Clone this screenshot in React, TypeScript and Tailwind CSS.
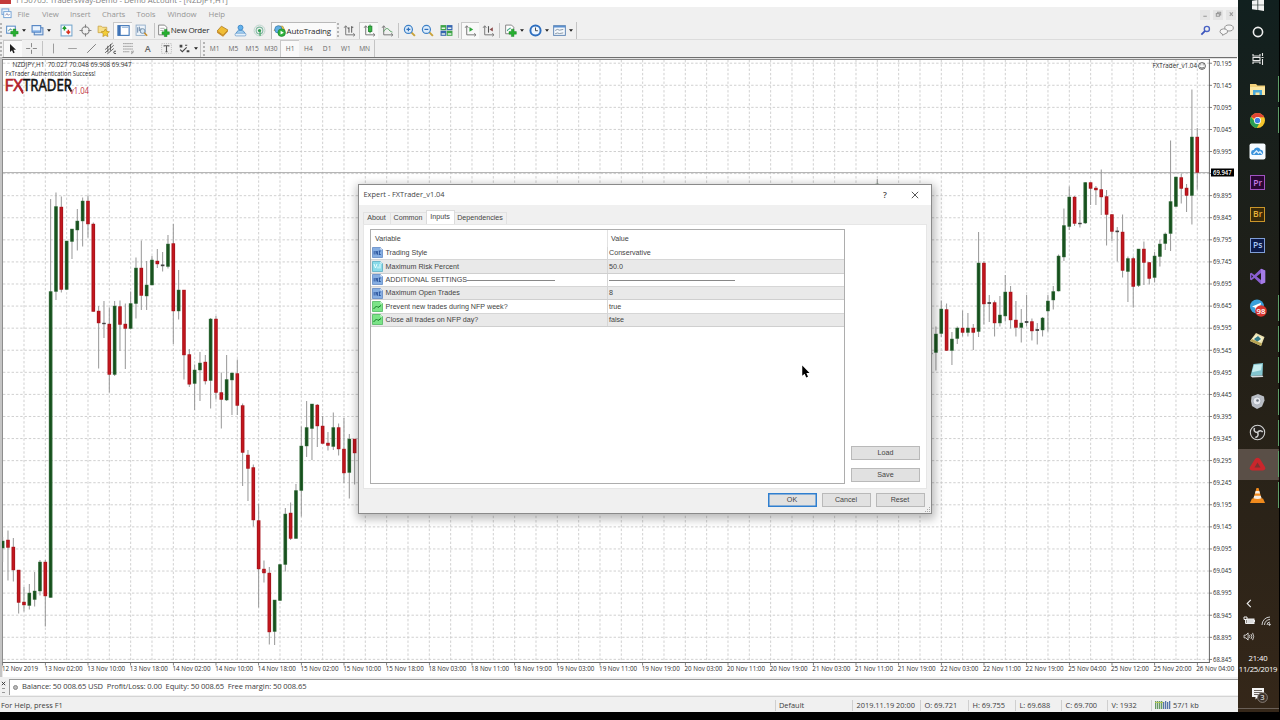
import type { ReactNode } from "react";

type Candle = [number, number, number, number, number, "g" | "r"];

// index, high, body top, body bottom, low, direction
const CANDLES: Candle[] = [
  [0, 537, 541, 548, 562, "g"], [1, 530.5, 540, 547.5, 580.5, "r"], [2, 538, 547, 570, 581.5, "r"],
  [3, 570, 570, 602.5, 613.5, "r"], [4, 587, 602, 605, 611.5, "r"], [5, 584, 593, 605.5, 609.5, "g"],
  [6, 572, 591, 599.5, 606.5, "g"], [7, 560, 562, 591, 595.5, "g"], [8, 560, 562, 596, 626.5, "r"],
  [9, 199, 291.5, 597.5, 597.5, "g"], [10, 192.5, 206.5, 291.5, 300, "g"], [11, 196.5, 207, 289.5, 292.5, "r"],
  [12, 241, 241, 289.5, 289.5, "g"], [13, 229, 229, 241.5, 259, "g"], [14, 209, 221, 230, 250.5, "g"],
  [15, 197.5, 201, 221, 246.5, "g"], [16, 195.5, 201, 224, 237.5, "r"], [17, 222.5, 224, 311.5, 311.5, "r"],
  [18, 306, 311, 323, 368.5, "r"], [19, 301, 323, 324, 338, "g"], [20, 307.5, 324, 374.5, 392.5, "r"],
  [21, 301, 306, 374.5, 376, "g"], [22, 300.5, 306.5, 324.5, 351, "r"], [23, 303.5, 324, 328.5, 369, "r"],
  [24, 291.5, 303.5, 328.5, 329.5, "g"], [25, 257.5, 268, 303.5, 318.5, "g"], [26, 240.5, 268, 295.5, 310, "r"],
  [27, 261, 285, 296, 310, "g"], [28, 256, 260, 285, 285, "g"], [29, 249, 261, 264, 268, "r"],
  [30, 252, 264.7, 266, 271.5, "r"], [31, 235, 244, 266.5, 268.5, "g"], [32, 224, 243.5, 311, 344, "r"],
  [33, 270, 290, 311, 319.5, "g"], [34, 290, 290, 355, 379.5, "r"], [35, 349, 354.5, 384.3, 387, "r"],
  [36, 364.5, 370, 383.5, 410, "g"], [37, 352, 363, 370, 401, "g"], [38, 355, 362, 381, 384.5, "r"],
  [39, 318, 319, 380.5, 408.5, "g"], [40, 316, 319, 392.5, 399.5, "r"], [41, 372.5, 392.5, 399.5, 428.5, "r"],
  [42, 355, 379.5, 400, 401, "g"], [43, 373, 373, 380, 415, "g"], [44, 359.5, 373.5, 405.5, 415, "r"],
  [45, 403.5, 405.5, 452.5, 486, "r"], [46, 450, 455, 468.5, 501, "r"], [47, 464.5, 467.5, 520, 526.5, "r"],
  [48, 504, 520.5, 569, 607.5, "r"], [49, 560.5, 569, 573, 582.5, "r"], [50, 567, 573, 632, 644.5, "r"],
  [51, 600, 600, 631.5, 645, "g"], [52, 564, 564.5, 600.5, 601, "g"], [53, 508, 514, 564.5, 571.5, "g"],
  [54, 502.5, 513, 538.5, 540, "r"], [55, 484, 490.5, 538.5, 538.5, "g"], [56, 426.5, 446, 490.5, 516.5, "g"],
  [57, 401, 427.5, 446, 457, "g"], [58, 404, 404, 428.5, 460, "g"], [59, 404, 405, 426, 447, "r"],
  [60, 416, 426, 443.5, 443.5, "r"], [61, 432, 443, 445.5, 450.5, "r"], [62, 412.5, 427.5, 446.5, 450, "g"],
  [63, 423.5, 427.5, 449, 455.5, "r"], [64, 418, 449, 473, 483, "r"], [65, 434, 439, 472.5, 498.5, "g"],
  [66, 439, 439, 453, 484.5, "r"], [164, 179, 184, 190, 195, "g"], [174, 353, 353, 354, 354, "r"],
  [175, 326.5, 334, 352.5, 370.5, "g"], [176, 300.5, 309, 333.5, 337, "g"], [177, 303.5, 309.5, 350.5, 351, "r"],
  [178, 332, 339, 350.5, 365, "g"], [179, 326.5, 328, 338.5, 344, "g"], [180, 310.5, 328, 332.5, 336.5, "r"],
  [181, 313, 328, 332.5, 336.5, "g"], [182, 324, 328, 332.5, 350, "r"], [183, 232, 263, 331.5, 337, "g"],
  [184, 261, 263, 304, 324.5, "r"], [185, 295, 302.3, 303.7, 322, "g"], [186, 300.5, 302.5, 323, 336.5, "r"],
  [187, 296, 315, 323, 326.5, "g"], [188, 275, 292, 316, 321.5, "g"], [189, 286, 292, 320, 328.5, "r"],
  [190, 301, 320, 327.5, 336.5, "r"], [191, 309, 323, 327.5, 342.5, "g"], [192, 295, 321.3, 322.7, 326.5, "g"],
  [193, 318.5, 321.5, 331, 340.5, "r"], [194, 323, 329.3, 330.7, 344.5, "g"], [195, 317, 318, 330, 336.5, "g"],
  [196, 295, 301, 311, 331.5, "g"], [197, 286, 291.5, 300, 309.5, "g"], [198, 254.5, 256, 291, 291.5, "g"],
  [199, 208.5, 225.5, 257, 261, "g"], [200, 186.5, 197, 226.5, 230, "g"], [201, 196, 197, 223.5, 226, "r"],
  [202, 210, 223, 224, 227.5, "g"], [203, 182, 182.5, 223, 224, "g"], [204, 182.5, 182.5, 188.5, 205, "r"],
  [205, 186, 188, 190, 205, "r"], [206, 169.5, 189.5, 197, 215, "r"], [207, 190, 196.5, 214.5, 245.5, "r"],
  [208, 214, 214.5, 231.5, 241, "r"], [209, 227, 230.8, 232, 261.5, "g"], [210, 214.5, 232, 270.5, 277.5, "r"],
  [211, 256.5, 258.5, 271.5, 302, "g"], [212, 256.5, 258.5, 286.5, 307.5, "r"], [213, 249, 249, 285.5, 287, "g"],
  [214, 241.5, 249, 262.5, 285, "r"], [215, 262, 262.5, 278.5, 284.5, "r"], [216, 252, 256, 277.5, 282.5, "g"],
  [217, 239.5, 244, 256.5, 266.5, "g"], [218, 232.5, 234, 243.5, 250, "g"], [219, 140.5, 201.5, 233.5, 251, "g"],
  [220, 177, 177, 206.5, 206.5, "g"], [221, 173.5, 177.5, 188.5, 203.5, "r"], [222, 184, 188, 195.5, 212, "r"],
  [223, 89.5, 137, 195.5, 224.5, "g"], [224, 128, 137, 172.5, 189.5, "r"],
];

const DATES = [
  "12 Nov 2019", "13 Nov 02:00", "13 Nov 10:00", "13 Nov 18:00", "14 Nov 02:00", "14 Nov 10:00", "14 Nov 18:00",
  "15 Nov 02:00", "15 Nov 10:00", "15 Nov 18:00", "18 Nov 03:00", "18 Nov 11:00", "18 Nov 19:00", "19 Nov 03:00",
  "19 Nov 11:00", "19 Nov 19:00", "20 Nov 03:00", "20 Nov 11:00", "20 Nov 19:00", "21 Nov 03:00", "21 Nov 11:00",
  "21 Nov 19:00", "22 Nov 03:00", "22 Nov 11:00", "22 Nov 19:00", "25 Nov 04:00", "25 Nov 12:00", "25 Nov 20:00",
  "26 Nov 04:00",
];

const X0 = 2.65;
const STEP = 5.333;

function Chart() {
  const rows = Array.from({ length: 28 }, (_, k) => k);
  const cols = Array.from({ length: 56 }, (_, k) => k);
  return (
    <svg viewBox="0 57 1238 620" className="block h-[620px] w-[1238px] shrink-0" fontFamily="'Open Sans','Noto Sans',sans-serif">
      <rect x="0" y="57" width="1238" height="620" fill="#fff" />
      <rect x="0" y="57" width="1237" height="1.2" fill="#6f6f6f" />
      <rect x="0" y="59" width="1210" height="1" fill="#8a8a8a" />
      <rect x="0" y="57" width="2.4" height="620" fill="#c4c4c4" />
      <rect x="2" y="59" width="0.8" height="604" fill="#777" />
      <g stroke="#cecece" strokeWidth="0.95" strokeDasharray="2.4 1.9">
        {rows.map((k) => <line key={k} x1="3" x2="1209" y1={63.2 + k * 22.08} y2={63.2 + k * 22.08} />)}
        {cols.map((k) => <line key={k} x1={24 + k * 21.333} x2={24 + k * 21.333} y1="60" y2="662" />)}
      </g>
      <rect x="3" y="172.2" width="1206" height="0.9" fill="#a4a4a4" />
      {CANDLES.map(([i, h, t, b, l, c]) => {
        const x = X0 + i * STEP;
        const thin = b - t < 1.6;
        return (
          <g key={i}>
            <rect x={x - 0.5} y={h} width="1" height={l - h} fill="#979797" />
            <rect x={x - 1.8} y={t - 0.2} width="3.6" height={b - t + 0.4} fill={thin ? "#444" : c === "g" ? "#2c6533" : "#a8141c"} />
            {!thin && <rect x={x - 0.8} y={t + 0.4} width="1.6" height={Math.max(0.5, b - t - 0.8)} fill={c === "g" ? "#164f1c" : "#c4161d"} />}
          </g>
        );
      })}
      <rect x="0" y="530" width="2" height="40" fill="#c4c4c4" />
      <rect x="1208.9" y="59" width="1" height="604" fill="#666" />
      <rect x="2.5" y="662" width="1207" height="1" fill="#666" />
      <g fontSize="6.6" fill="#2c2c2c">
        {rows.map((k) => {
          const y = 63.2 + k * 22.08;
          return (
            <g key={k}>
              <rect x="1209" y={y - 0.4} width="3" height="0.8" fill="#666" />
              {k !== 5 && <text x="1213" y={y + 2.3} textLength="18.6" lengthAdjust="spacingAndGlyphs">{(70.195 - k * 0.05).toFixed(3)}</text>}
            </g>
          );
        })}
        {DATES.map((d, k) => (
          <g key={d}>
            <rect x={X0 + k * 42.667 - 0.4} y="663" width="0.8" height="2.5" fill="#666" />
            <text x={k === 0 ? 2 : 1.9 + k * 42.655} y="670.8" textLength={k === 0 ? 36 : 38} lengthAdjust="spacingAndGlyphs">{d}</text>
          </g>
        ))}
        <text x="12.5" y="67.2" fontSize="6.4" textLength="119" lengthAdjust="spacingAndGlyphs" xmlSpace="preserve">NZDJPY,H1  70.027 70.048 69.908 69.947</text>
        <text x="5.5" y="76" fontSize="6.4" textLength="90" lengthAdjust="spacingAndGlyphs">FxTrader Authentication Success!</text>
        <text x="1152.5" y="68.200" fontSize="6.6" textLength="44.5" lengthAdjust="spacingAndGlyphs">FXTrader_v1.04</text>
      </g>
      <g fill="none" stroke="#333" strokeWidth="0.8">
        <circle cx="1202" cy="66" r="3.4" />
        <path d="M1200.2 67.3q1.8 1.8 3.6 0M1200.8 64.4v.9M1203.2 64.4v.9" />
      </g>
      <rect x="1211" y="168.5" width="23" height="8" fill="#000" />
      <text x="1213" y="174.9" fontSize="6.6" fontWeight="600" fill="#fff" textLength="18.6" lengthAdjust="spacingAndGlyphs">69.947</text>
      <g fontSize="16.4">
        <text x="4.6" y="91" fill="#b3202a" stroke="#b3202a" strokeWidth="0.6" textLength="18.5" lengthAdjust="spacingAndGlyphs">FX</text>
        <path d="M19 86l4 7.5" stroke="#b3202a" strokeWidth="1.8" />
        <text x="23" y="91" fill="#111" stroke="#111" strokeWidth="0.6" textLength="49" lengthAdjust="spacingAndGlyphs">TRADER</text>
        <path d="M68.5 87l3 4.5" stroke="#111" strokeWidth="1.5" />
        <text x="70" y="94.200" fontSize="8.4" fill="#c0303c" textLength="19" lengthAdjust="spacingAndGlyphs">v1.04</text>
      </g>
    </svg>
  );
}

function Svg({ children, className = "size-[13px]" }: { children: ReactNode; className?: string }) {
  return <svg viewBox="0 0 12 12" className={`shrink-0 ${className}`} fill="none">{children}</svg>;
}

function Tool({ children, pressed = false, wide = false }: { children: ReactNode; pressed?: boolean; wide?: boolean }) {
  return (
    <span className={`flex h-[17px] shrink-0 items-center justify-center ${wide ? "w-[24.5px] gap-[3px]" : "w-[18.75px]"} ${pressed ? "border-l border-t border-[#c9c9c9] bg-[#f9f9f9]" : ""}`}>
      {children}
    </span>
  );
}

const Caret = () => <svg viewBox="0 0 4 3" className="h-[3px] w-[4px] shrink-0"><path d="M0 .3h4L2 2.7z" fill="#222" /></svg>;
const Sep = ({ m = "mx-[3px]" }: { m?: string }) => <span className={`h-[15px] w-px shrink-0 bg-[#c4c4c4] ${m}`} />;
const Grip = ({ m = "" }: { m?: string }) => <span className={`h-[14px] w-[2px] shrink-0 border-l-2 border-dotted border-[#b4b4b4] ${m}`} />;

const Plus = ({ x = 5, y = 5 }: { x?: number; y?: number }) => (
  <path d={`M${x + 2} ${y}h2.4v2.2h2.2v2.4h-2.2v2.2h-2.4v-2.2h-2.2v-2.4h2.2z`} fill="#27b030" stroke="#138020" strokeWidth=".4" />
);
const Axes = () => <path d="M2.5 2v8h8M1 3.5L2.5 1.6 4 3.5M9.5 8.6l1.6 1.4-1.6 1.3" stroke="#777" strokeWidth=".9" />;

function MainToolbar() {
  return (
    <div className="flex h-[19px] items-center pt-px text-[8px] text-[#2a2a2a]">
      <Grip m="mr-[2px]" />
      <Tool wide><Svg><rect x=".6" y="2" width="8" height="6.5" fill="#fff" stroke="#5d8fc9" /><path d="M2 6.5l2-2 1.5 1" stroke="#7aa" /><Plus x={4.6} y={4.6} /></Svg><Caret /></Tool>
      <Tool wide><Svg><rect x="3" y="3.5" width="8" height="6.5" fill="#d9e7f7" stroke="#5a86bf" /><rect x="1" y="1.5" width="8" height="6" fill="#eaf3fd" stroke="#4d7fc0" /><path d="M1.5 6.5h7" stroke="#5a95dd" /></Svg><Caret /></Tool>
      <span className="w-[4px] shrink-0" />
      <Tool><Svg><rect x="1" y="1" width="10" height="10" fill="#f8fbff" stroke="#78a8cc" /><path d="M2.5 4.5l1.6-1.8 1.6 1.8M4.1 3v3" stroke="#1d9a2b" strokeWidth="1.3" /><path d="M6 7l1.7 1.8L9.3 7M7.7 5.2v3" stroke="#d8331f" strokeWidth="1.3" /></Svg></Tool>
      <Tool><Svg><circle cx="6" cy="6" r="3.4" stroke="#808080" strokeWidth="1" /><path d="M6 .5v3M6 8.500v3M.5 6h3M8.500 6h3" stroke="#808080" strokeWidth="1" /></Svg></Tool>
      <Tool><Svg><path d="M1 2h3l1 1h4v5H1z" fill="#f7e08a" stroke="#c7a040" strokeWidth=".7" /><path d="M7.700 4.500l1.200 2.300 2.600.4-1.900 1.800.5 2.600-2.400-1.200-2.300 1.200.4-2.600-1.900-1.800 2.600-.4z" fill="#f3ce38" stroke="#b58a1b" strokeWidth=".6" /></Svg></Tool>
      <Tool pressed><Svg><rect x=".8" y="1.500" width="10.400" height="9" fill="#fff" stroke="#3f76b8" /><rect x="1" y="1.500" width="2.400" height="9" fill="#3a6fb5" /><path d="M4.500 3h6" stroke="#8fb2da" /></Svg></Tool>
      <Tool><Svg><rect x="1" y="1" width="8.500" height="9.500" fill="#edf4fb" stroke="#8fabc7" strokeWidth=".8" /><path d="M2.500 3v5M4 2.500v4M5.500 4v4" stroke="#58799c" strokeWidth=".8" /><circle cx="7" cy="6.500" r="2.200" fill="#d5e7f5" stroke="#6b88a3" strokeWidth=".8" /><path d="M8.600 8l2.600 2.800" stroke="#c98c26" strokeWidth="1.300" /></Svg></Tool>
      <Sep m="ml-[3px] mr-[2px]" />
      <span className="flex w-[56px] shrink-0 items-center gap-[1px] overflow-visible whitespace-nowrap">
        <Svg><path d="M1.500 1h5.500l2 2v7H1.500z" fill="#fff" stroke="#777" strokeWidth=".8" /><path d="M3 4h4M3 6h3" stroke="#999" strokeWidth=".7" /><Plus x={4.800} y={5} /></Svg>
        <span className="tracking-[-0.035em]">New Order</span>
      </span>
      <Tool><Svg><path d="M1 6.500l4-4.500 6 3.500-4.500 5z" fill="#f0bd35" stroke="#a9751a" strokeWidth=".7" /><path d="M1 6.500l5.500 4 4.500-5v1.500L6.500 11.800 1 8z" fill="#c98a22" /></Svg></Tool>
      <Tool><Svg><circle cx="6" cy="3.400" r="2.300" fill="#63b2ec" stroke="#2b79be" strokeWidth=".7" /><path d="M2 10.500c0-3.500 1-4.500 4-4.500s4 1 4 4.500z" fill="#a6d2f3" stroke="#3b82c0" strokeWidth=".8" /><rect x="1" y="8.500" width="10" height="2.500" rx="1" fill="#e5f1fb" stroke="#5d92c4" strokeWidth=".6" /></Svg></Tool>
      <Tool><Svg><circle cx="6" cy="6" r="5" stroke="#bcd3cb" strokeWidth=".9" /><circle cx="6" cy="6" r="3.100" stroke="#7fb7a0" strokeWidth="1" /><circle cx="6" cy="6" r="1.500" fill="#2f9f51" /><path d="M6.500 6v5" stroke="#3aa25a" /></Svg></Tool>
      <span className="ml-[1.500px] flex h-[17px] w-[65px] shrink-0 items-center gap-[1px] whitespace-nowrap border-l border-t border-[#b9b9b9] bg-[#fafafa] pl-[1px]">
        <Svg><path d="M1 6l3-4h5l2 4z" fill="#f3cf4d" stroke="#a58424" strokeWidth=".6" /><circle cx="5" cy="5" r="3.400" fill="#62aee2" stroke="#2d75ab" strokeWidth=".6" /><circle cx="8" cy="8" r="3.500" fill="#2fb23c" stroke="#14802a" strokeWidth=".6" /><path d="M7 6.200l3 1.800-3 1.800z" fill="#fff" /></Svg>
        <span className="tracking-[-0.015em]">AutoTrading</span>
      </span>
      <Grip m="ml-[1px] mr-[2px]" />
      <Tool><Svg><Axes /><path d="M5.500 3v5M5.500 4H4.300M8 2v6M8 3h1.500" stroke="#555" strokeWidth=".9" /></Svg></Tool>
      <Tool pressed><Svg><Axes /><path d="M6.500 .500v8" stroke="#187a25" strokeWidth=".8" /><rect x="5" y="2" width="3.200" height="5" fill="#38b846" stroke="#187a25" strokeWidth=".7" /></Svg></Tool>
      <Tool><Svg><Axes /><path d="M2.500 7c2-4 4-3 5-1.500S9.500 7 10.500 7.500" stroke="#4d9b58" strokeWidth=".9" /></Svg></Tool>
      <Sep m="ml-[1px] mr-[1px]" />
      <Tool><Svg><path d="M7.500 7.500L11 11" stroke="#c9a23a" strokeWidth="1.800" /><circle cx="5" cy="5" r="3.700" fill="#dcecfb" stroke="#3e80c6" strokeWidth="1.100" /><path d="M3.200 5h3.600M5 3.200v3.600" stroke="#2f6fbb" strokeWidth="1.100" /></Svg></Tool>
      <Tool><Svg><path d="M7.500 7.500L11 11" stroke="#c9a23a" strokeWidth="1.800" /><circle cx="5" cy="5" r="3.700" fill="#dcecfb" stroke="#3e80c6" strokeWidth="1.100" /><path d="M3.200 5h3.600" stroke="#2f6fbb" strokeWidth="1.100" /></Svg></Tool>
      <Tool><Svg><rect x=".500" y="1" width="5.300" height="4.700" fill="#3fa548" /><rect x="6.200" y="1" width="5.300" height="4.700" fill="#3766b0" /><rect x=".500" y="6.200" width="5.300" height="4.700" fill="#3766b0" /><rect x="6.200" y="6.200" width="5.300" height="4.700" fill="#3fa548" /><path d="M1.500 4h3.300M7.200 4h3.300M1.500 9.200h3.300M7.200 9.200h3.300" stroke="#e8f4ea" strokeWidth="1.400" /></Svg></Tool>
      <Sep m="ml-[1.500px] mr-[2px]" />
      <Tool pressed><Svg><Axes /><path d="M5 2.800L8.500 5 5 7.200z" fill="#2fa63c" /></Svg></Tool>
      <Tool><Svg><Axes /><path d="M6 2v6" stroke="#555" /><path d="M10 3L7 5l3 2z" fill="#8a4a4a" /></Svg></Tool>
      <Sep m="ml-[1px] mr-[2px]" />
      <Tool wide><Svg><path d="M1.500 1h5.500l2 2v6H1.500z" fill="#fff" stroke="#777" strokeWidth=".8" /><path d="M3 6.500c1-3 2-1 3-3" stroke="#4a8" /><Plus x={4.800} y={4.800} /></Svg><Caret /></Tool>
      <Tool wide><Svg><circle cx="6" cy="6" r="4.700" fill="#eef6ff" stroke="#2d6fc0" strokeWidth="1.800" /><path d="M6 3.200V6.200h2.200" stroke="#333" strokeWidth=".8" /></Svg><Caret /></Tool>
      <Tool wide><Svg><rect x=".6" y="1.500" width="10.800" height="9" fill="#f4f8fc" stroke="#5f86b4" strokeWidth=".9" /><path d="M.6 2.500h10.800" stroke="#5b90cf" strokeWidth="1.500" /><path d="M2 6l2-1 2 .7L9.500 5M2 9l2-.7 2 .5 3.500-.6" stroke="#7b8b9b" strokeWidth=".8" /></Svg><Caret /></Tool>
      <span className="h-[17px] w-px bg-[#c4c4c4]" />
      <span className="grow" />
      <Svg className="mr-[8px] size-[11px]"><circle cx="7.500" cy="4.300" r="2.800" stroke="#4a63c4" strokeWidth="1.500" /><path d="M5.500 6.500L1.500 10.500" stroke="#3c55bd" strokeWidth="2" /></Svg>
      <svg viewBox="0 0 15 12" className="mr-[4px] h-[12px] w-[15px]" fill="#f6f6f6" stroke="#8a8a8a" strokeWidth=".9"><ellipse cx="10" cy="4" rx="4.300" ry="3" /><path d="M1 7.500a3.800 2.600 0 1 1 5 2.400L3.500 11.300 3.300 9.900A3.500 2.500 0 0 1 1 7.500z" /></svg>
    </div>
  );
}

const PERIODS = ["M1", "M5", "M15", "M30", "H1", "H4", "D1", "W1", "MN"];

function LineToolbar() {
  return (
    <div className="flex h-[18px] items-center border-t border-[#dcdcdc]">
      <Grip m="mr-[1px]" />
      <Tool pressed><Svg className="mr-[2px] size-[12px]"><path d="M4 1v8l2-1.800 1.300 3 1.400-.6L7.400 6.700H10z" fill="#1d1d1d" /></Svg></Tool>
      <Tool><Svg><path d="M6 1v3.800M6 7.200V11M1 6h3.800M7.200 6H11" stroke="#888" strokeWidth=".9" /></Svg></Tool>
      <Sep m="mx-[1px]" />
      <span className="w-[1px]" />
      <Tool><Svg><path d="M6 1.500v9" stroke="#999" strokeWidth=".9" /></Svg></Tool>
      <Tool><Svg><path d="M2 6h8" stroke="#a0a0a0" strokeWidth=".9" /></Svg></Tool>
      <Tool><Svg><path d="M2 10L10 2" stroke="#808080" strokeWidth=".9" /></Svg></Tool>
      <Tool><Svg><path d="M1 7l7-6M1 10l8-7M3 11l6-5M3.500 3.500v6M6 2v6" stroke="#555" strokeWidth=".8" /><path d="M11 8.500q-2-.5-2 1t2 1.200" stroke="#333" strokeWidth=".8" /></Svg></Tool>
      <Tool><Svg><path d="M1 1.500h9M1 4h9M1 6.500h9M1 9h6M9 11.200V8.500h2M9 9.800h1.500" stroke="#8c8c8c" strokeWidth=".8" strokeDasharray="1.500 .4" /></Svg></Tool>
      <Tool><span className="text-[9px] font-semibold leading-none text-[#666]">A</span></Tool>
      <Tool><Svg><rect x="1.500" y="1.500" width="9" height="9" stroke="#b4b4b4" strokeWidth=".8" strokeDasharray="1 1" /><path d="M3.800 4.200V3.500h4.400V4.200M6 3.500V9M5 9h2" stroke="#555" strokeWidth="1" /></Svg></Tool>
      <Tool wide><Svg><path d="M1.500 2.500h2.500v2.500H1.500zM8 7.500h2.500v2H8z" fill="#444" /><path d="M2 7l2 2 4-4M6.500 3h2" stroke="#444" strokeWidth="1" /></Svg><Caret /></Tool>
      <span className="h-[17px] w-px bg-[#c4c4c4]" />
      <Grip m="ml-[2px]" />
      {PERIODS.map((p) => (
        <Tool key={p} pressed={p === "H1"}><span className="pt-[1.500px] text-[6.600px] leading-none text-[#666]">{p}</span></Tool>
      ))}
      <span className="h-[17px] w-px bg-[#c4c4c4]" />
    </div>
  );
}

const MENU = [
  ["File", "w-[24.5px]"], ["View", "w-[28px]"], ["Insert", "w-[32px]"], ["Charts", "w-[34.5px]"],
  ["Tools", "w-[31px]"], ["Window", "w-[41px]"], ["Help", "w-[20px]"],
];

function Header() {
  return (
    <header className="flex h-[57px] w-full shrink-0 flex-col bg-[#f0f0f0]">
      <div className="flex h-[7px] items-start overflow-hidden bg-white">
        <span className="h-[4px] w-[11px] shrink-0 bg-[#c33b3b]" />
        <span className="-mt-[5px] ml-[4px] whitespace-nowrap text-[7.750px] leading-[10px] text-[#7d7d7d]">1150705: TradersWay-Demo - Demo Account - [NZDJPY,H1]</span>
      </div>
      <div className="flex h-[13px] items-center pt-[2px] text-[7.8px] text-[#969696]">
        <Svg className="mb-[2px] ml-[1px] mr-[5.5px] size-[11px]"><rect x="1" y="1" width="7.500" height="6" fill="#e8f1fb" stroke="#6f9fd4" /><rect x="3" y="4" width="8" height="6.500" fill="#fff" stroke="#6f9fd4" /><path d="M5 8l1.500-2L8 8l1.500-1.500" stroke="#88a" /></Svg>
        {MENU.map(([m, w]) => <span key={m} className={`${w} shrink-0 tracking-[-0.01em]`}>{m}</span>)}
        <span className="grow" />
        <span className="mr-[2px] flex gap-[3px]">
          {["M1.500 6h4", "M1.500 3h3.500v3H1.500zM3 3V1.500h3.500v3H5", "M2 1.500l3.500 4M5.500 1.500L2 5.500"].map((d) => (
            <span key={d} className="flex h-[10px] w-[10px] items-center justify-center bg-[#e5e5e5]">
              <svg viewBox="0 0 8 8" className="size-[7px]" fill="none" stroke="#999" strokeWidth="1.200"><path d={d} /></svg>
            </span>
          ))}
        </span>
      </div>
      <MainToolbar />
      <LineToolbar />
    </header>
  );
}

function Terminal() {
  return (
    <div className="flex h-[19px] w-full shrink-0 items-center bg-[#f0f0f0]">
      <span className="flex w-[9px] flex-col items-center text-[#333]">
        <svg viewBox="0 0 6 6" className="mr-[2px] size-[5px]" stroke="#333" strokeWidth="1.100"><path d="M1 1l4 4M5 1L1 5" /></svg>
        <span className="mr-[2px] mt-[2px] h-[5px] w-[3px] border-y border-[#999]" />
      </span>
      <div className="flex h-[16px] grow items-center border-l border-t border-[#9c9c9c] bg-white pl-[3px] text-[7.6px] text-[#3c3c3c]">
        <span className="mr-[4px] flex size-[5px] items-center justify-center rounded-full border border-[#888] bg-[#bbb]" />
        <span className="whitespace-pre tracking-[-0.014em]">Balance: 50 008.65 USD  Profit/Loss: 0.00  Equity: 50 008.65  Free margin: 50 008.65</span>
      </div>
    </div>
  );
}

const STATUS = [
  ["2019.11.19 20:00", "w-[68px]"], ["O: 69.721", "w-[48px]"], ["H: 69.755", "w-[47px]"],
  ["L: 69.688", "w-[46px]"], ["C: 69.700", "w-[46px]"], ["V: 1932", "w-[44px]"],
];

function StatusBar() {
  return (
    <footer className="flex h-[16px] w-full shrink-0 items-center border-t border-[#d4d4d4] bg-[#f0f0f0] pt-[2px] text-[7.4px] text-[#3c3c3c]">
      <span className="w-[775px] pl-[1px]">For Help, press F1</span>
      <span className="w-[77px] border-l border-[#cfcfcf] pl-[3px]">Default</span>
      {STATUS.map(([t, w]) => <span key={t} className={`${w} shrink-0 whitespace-nowrap border-l border-[#cfcfcf] pl-[3.500px]`}>{t}</span>)}
      <span className="flex items-center gap-[2px] border-l border-[#cfcfcf] pl-[3px]">
        <svg viewBox="0 0 16 8" className="h-[8px] w-[16px]" strokeWidth="1.100">
          <path d="M.7 0v8M2.700 0v8M4.700 0v8M6.700 0v8" stroke="#4f8a4c" /><path d="M8.700 1v7M10.700 0v8M12.700 1v7M14.700 0v8" stroke="#3c5f9e" /><path d="M0 1.500h8" stroke="#b5c95a" strokeWidth="1" />
        </svg>
        57/1 kb
      </span>
    </footer>
  );
}

const INPUTS: [string, string, string][] = [
  ["int", "Trading Style", "Conservative"],
  ["dbl", "Maximum Risk Percent", "50.0"],
  ["int", "ADDITIONAL SETTINGS", "-"],
  ["int", "Maximum Open Trades", "8"],
  ["bool", "Prevent new trades during NFP week?", "true"],
  ["bool", "Close all trades on NFP day?", "false"],
];

function TypeIcon({ kind }: { kind: string }) {
  const fill = kind === "int" ? "#86aee2" : kind === "dbl" ? "#8adbe9" : "#7be487";
  const line = kind === "int" ? "#5580c0" : kind === "dbl" ? "#4fa8bd" : "#43b054";
  return (
    <svg viewBox="0 0 11 11" className="size-[11px] shrink-0">
      <path d="M.5.5h8l2 2v8H.5z" fill={fill} stroke={line} strokeWidth=".7" />
      <path d="M8.500.5v2h2z" fill="#fff" />
      {kind === "int" && <path d="M2.200 4v3.500M4 7.500V4l1.600 3.500V4M7.500 4v3.500M6.800 4h2M6.800 7.500h2" fill="none" stroke="#214a94" strokeWidth=".8" />}
      {kind === "dbl" && <path d="M2 3l1.500 4L5 3M6 5.500v2M8 3v4.500" fill="none" stroke="#e9ffff" strokeWidth="1" />}
      {kind === "bool" && <path d="M1.500 8l3-3 1.500 1.500L9 4.500" fill="none" stroke="#157a28" strokeWidth="1" />}
    </svg>
  );
}

function Button({ children, className = "" }: { children: ReactNode; className?: string }) {
  return <button className={`flex h-[14px] items-center justify-center border bg-[#e1e1e1] pt-[1.500px] leading-none ${className || "w-[49px] border-[#b9b9b9]"}`}>{children}</button>;
}

function ExpertDialog() {
  return (
    <section className="absolute left-[358px] top-[184px] flex h-[330px] w-[573.500px] flex-col border border-[#8a8a8a] bg-[#f0f0f0] font-['Liberation_Sans',sans-serif] text-[7.150px] text-[#444] shadow-[1px_3px_9px_2px_rgba(0,0,0,0.28)]">
      <div className="flex h-[20px] shrink-0 items-center bg-white pl-[4.500px] font-['Open_Sans','Noto_Sans',sans-serif] text-[7.400px]">
        <span className="grow">Expert - FXTrader_v1.04</span>
        <span className="w-[28px] text-[8.500px] font-semibold text-[#444]">?</span>
        <svg viewBox="0 0 8 8" className="mr-[11.500px] size-[8px]" stroke="#444" strokeWidth=".9"><path d="M.8.8l6.400 6.400M7.200.8L.8 7.200" /></svg>
      </div>
      <div className="flex h-[18.500px] shrink-0 items-end pl-[3.500px]">
        <span className="flex h-[12px] w-[28px] items-center justify-center border border-b-0 border-[#e2e2e2]">About</span>
        <span className="flex h-[12px] w-[35px] items-center justify-center border border-x-0 border-b-0 border-[#e2e2e2]">Common</span>
        <span className="flex h-[14px] w-[29px] items-center justify-center border border-b-0 border-[#dcdcdc] bg-white">Inputs</span>
        <span className="flex h-[12px] w-[52px] items-center justify-center border border-l-0 border-b-0 border-[#e2e2e2]">Dependencies</span>
      </div>
      <div className="mx-[4px] flex h-[265.500px] shrink-0 gap-[6px] border border-[#e6e6e6] bg-white pl-[6px] pt-[4.500px]">
        <div className="flex h-[254.500px] w-[475px] flex-col border border-[#adadad] bg-white">
          <div className="flex h-[16.800px] shrink-0 items-center">
            <span className="w-[235.500px] pl-[4px] pt-[2px]">Variable</span>
            <span className="flex h-full items-center border-l border-[#e2e2e2] pl-[3.500px] pt-[2px]">Value</span>
          </div>
          {INPUTS.map(([k, n, v], i) => (
            <div key={n} className={`flex h-[13.370px] shrink-0 items-center overflow-hidden whitespace-nowrap border-b ${i % 2 ? "border-[#cfcfcf] bg-[#e9e9e9]" : "border-[#d6d6d6]"}`}>
              <span className="flex w-[235.500px] shrink-0 items-center gap-[2.500px] pl-[1px]">
                <TypeIcon kind={k} />
                <span className={`pt-[1.500px] ${i === 2 ? "tracking-[0.01em]" : ""}`}>{n}</span>
                {v === "-" && <span className="-ml-[2.500px] mt-px h-px w-[88px] bg-[#888]" />}
              </span>
              <span className="flex h-full items-center border-l border-[#d6d6d6] pl-[1.500px] pt-[1.500px]">
                {v === "-" ? <span className="h-px w-[126px] bg-[#888]" /> : v}
              </span>
            </div>
          ))}
        </div>
        <div className="flex flex-col gap-[8px] pt-[216.500px]">
          <Button className="w-[69px] border-[#b9b9b9]">Load</Button>
          <Button className="w-[69px] border-[#b9b9b9]">Save</Button>
        </div>
      </div>
      <div className="flex grow items-start justify-end gap-[5px] pr-[6px] pt-[4px]">
        <Button className="w-[49px] border-[#2f7fd0] shadow-[inset_0_0_0_0.500px_#2f7fd0]">OK</Button>
        <Button>Cancel</Button>
        <Button>Reset</Button>
      </div>
      <svg viewBox="0 0 6 6" className="absolute bottom-0 right-0 size-[6px]" fill="#aaa"><path d="M4 0h1v1H4zM2 2h1v1H2zM4 2h1v1H4zM0 4h1v1H0zM2 4h1v1H2zM4 4h1v1H4z" /></svg>
    </section>
  );
}

function Adobe({ children, className }: { children: string; className: string }) {
  return <span className={`flex size-[15px] items-center justify-center border font-['Open_Sans',sans-serif] text-[8.500px] font-semibold leading-none ${className}`}>{children}</span>;
}

function Slot({ children, active = false, running = false }: { children: ReactNode; active?: boolean; running?: boolean }) {
  return (
    <div className={`flex h-[31.250px] shrink-0 items-center ${active ? "bg-[#5a4f47]" : ""}`}>
      <span className="flex w-[39.500px] items-center justify-center">{children}</span>
      <span className={`h-[26px] w-[1.500px] ${running ? "bg-[#5f9d68]" : ""}`} />
    </div>
  );
}

function Taskbar() {
  const icon = "size-[17px]";
  return (
    <aside className="flex h-[712px] w-[42px] shrink-0 flex-col overflow-hidden border-r border-black bg-linear-to-b from-[#11201f] via-[#211f17] via-45% to-[#352719] text-white">
      <div className="flex h-[73.500px] w-[40px] shrink-0 flex-col items-center">
        <svg viewBox="0 0 12 12" className="-mt-[1px] size-[12px]" fill="#f2f2f2"><path d="M0 1.700l5.500-.7v4.700H0zM6.200.9L12 0v5.700H6.200zM0 6.300h5.500V11L0 10.300zM6.200 6.300H12V12l-5.800-.9z" /></svg>
        <svg viewBox="0 0 12 12" className="mt-[15px] size-[12px]" fill="none" stroke="#eee" strokeWidth="1.600"><circle cx="6" cy="6" r="4.600" /></svg>
        <svg viewBox="0 0 12 12" className="mt-[14.500px] size-[12px]" fill="none" stroke="#e8e8e8" strokeWidth="1.100"><path d="M1 1v2h7V1M1 11V9h7v2M1 4.500h7v3H1zM10.500 0v3M10.500 6v6M9.500 4.500h2" /></svg>
      </div>
      <Slot running><svg viewBox="0 0 17 17" className={icon}><path d="M1 3h6l1.500 1.500H16V14H1z" fill="#f2d07a" /><path d="M1 6h15v8H1z" fill="#fbe6a1" /><path d="M4 14V9h9v5h-2.500v-2.500h-4V14z" fill="#4aa8d8" /></svg></Slot>
      <Slot running><svg viewBox="0 0 17 17" className={icon}><circle cx="8.500" cy="8.500" r="7.500" fill="#f6c62c" /><path d="M8.500 8.500L2 4.700A7.500 7.500 0 0 1 15.300 5.200H8.500z" fill="#df4434" /><path d="M2 4.700A7.500 7.500 0 0 0 7.800 16l3.200-6-5.300-.5z" fill="#2a9f55" /><circle cx="8.500" cy="8.500" r="3.500" fill="#fff" /><circle cx="8.500" cy="8.500" r="2.700" fill="#3f82e6" /></svg></Slot>
      <Slot><svg viewBox="0 0 17 17" className={icon}><rect x=".5" y=".5" width="16" height="16" rx="2" fill="#f6fbff" /><path d="M4.500 12a2.500 2.500 0 0 1 .2-5 3.600 3.600 0 0 1 6.800-.2 2.700 2.700 0 0 1 1 5.200z" fill="#3a93dc" /><path d="M4.500 11l3-3 2 2 1.500-1.300 2 2.300" stroke="#dff0fd" strokeWidth="1.300" fill="none" /></svg></Slot>
      <Slot><Adobe className="border-[#a052c0] bg-[#2a0634] text-[#c77be6]">Pr</Adobe></Slot>
      <Slot><Adobe className="border-[#c9952a] bg-[#3a2a08] text-[#e8b23a]">Br</Adobe></Slot>
      <Slot><Adobe className="border-[#7f9ed6] bg-[#0c1a4a] text-[#a9c8f5]">Ps</Adobe></Slot>
      <Slot><svg viewBox="0 0 17 17" className={icon}><path d="M12 .8l4.200 1.800v11.800L12 16.200 5.400 10 2.400 12.300 1 11.600V5.400l1.400-.7 3 2.300z" fill="#8a5fd0" /><path d="M12 5v7L7.600 8.500zM2.400 6.700v3.600l1.700-1.800z" fill="#1f1d18" /><path d="M12 .8l4.200 1.800v11.800L12 16.200z" fill="#a57ce6" /></svg></Slot>
      <Slot running><svg viewBox="0 0 18 18" className="size-[18px]"><circle cx="8" cy="7.500" r="7" fill="#3aa0dc" /><path d="M3 7.500l9-3.700-1.500 8-2.500-1.800-1.500 1.300-.3-2.500z" fill="#fff" /><circle cx="12" cy="12" r="5.800" fill="#d9352f" /><text x="12" y="14.800" fontSize="7.800" fontWeight="600" textAnchor="middle" fill="#fff" fontFamily="Open Sans">98</text></svg></Slot>
      <Slot running><svg viewBox="0 0 17 17" className={icon}><path d="M1 10l6-8 8.500 4-3.500 9z" fill="#e9dfae" /><path d="M2 9l5-5 7 3-4 6z" fill="#f7f3d0" /><path d="M5 8l4-3 3 3-4 3z" fill="#357d8c" /><path d="M1 10l11 5 1-2.500L3 8z" fill="#b7a353" /></svg></Slot>
      <Slot running><svg viewBox="0 0 17 17" className={icon}><path d="M4.500 2L14 1l-.5 12.500-12 .5z" fill="#83c5cf" /><path d="M5 3l8-.8-1 6-9 2z" fill="#c8eef0" /><path d="M1.500 14l12-.5.8 1.500-11 .5z" fill="#d9dde0" /></svg></Slot>
      <Slot running><svg viewBox="0 0 17 17" className={icon}><path d="M2.500 3.500L9 1l6 2.500.5 4-2.500 6-5 2.500-5-3-1-5z" fill="#b9bdc4" /><circle cx="8" cy="8" r="4" fill="#e6e9ee" stroke="#a5abb5" strokeWidth=".8" /><circle cx="8.500" cy="7.500" r="1.300" fill="#6d7580" /></svg></Slot>
      <Slot running><svg viewBox="0 0 17 17" className={icon} fill="none" stroke="#d2d2d2"><circle cx="8.500" cy="8.500" r="7.200" strokeWidth="1.100" fill="#27231f" /><path d="M8.500 8.500c-3 0-4-2-3-4.500M8.500 8.500c1.500-2.500 4-2.300 5.200-.5M8.500 8.500c1.500 2.500.2 4.500-2.200 5" strokeWidth="1.500" /></svg></Slot>
      <Slot active running><svg viewBox="0 0 17 17" className={icon}><path d="M6 3q2.500-2.500 5 0l5 8q1.200 3-2 3.500H3Q-.2 14 1 11z" fill="#c9262c" /><path d="M8.500 6.500l3 5h-6z" fill="#7b3330" /></svg></Slot>
      <Slot running><svg viewBox="0 0 17 17" className={icon}><path d="M3 11.500h11l2 4.500H1z" fill="#ef8a1d" /><path d="M7.500 1h2l3.500 12q-4.500 2-9 0z" fill="#f28a1c" /><path d="M6.700 4h3.600l.8 2.600H5.900zM5.200 8.700h6.600l.7 2.600q-4 1.300-8 0z" fill="#f5ece2" /></svg></Slot>
      <div className="grow" />
      <div className="flex h-[112px] shrink-0 flex-col">
        <svg viewBox="0 0 6 10" className="ml-[8px] mt-[3px] h-[9px] w-[6px] shrink-0" fill="none" stroke="#eee" strokeWidth="1.200"><path d="M5 1L1 5l4 4" /></svg>
        <div className="mt-[7.500px] flex shrink-0 gap-[6px] pl-[5px]">
          <svg viewBox="0 0 12 9" className="h-[9px] w-[12px]" fill="none" stroke="#eee"><rect x="4" y="3" width="7" height="4.500" fill="#ddd" /><path d="M1 1h3v2.500H1zM2.500 3.500V7.500h2M11.500 4v2" /></svg>
          <svg viewBox="0 0 10 10" className="size-[10px]" fill="none" stroke="#ccc" strokeWidth="1"><path d="M1 9A8 8 0 0 1 9 1M3.500 9A5.500 5.500 0 0 1 9 3.500M6 9a3 3 0 0 1 3-3" /><circle cx="8.500" cy="8.500" r=".8" fill="#ccc" /></svg>
        </div>
        <svg viewBox="0 0 12 10" className="ml-[5px] mt-[6px] h-[9px] w-[12px] shrink-0" fill="none" stroke="#eee" strokeWidth=".9"><path d="M.5 3.500h2L5 1v8L2.500 6.500h-2zM6.500 3.500q1 1.500 0 3M8.200 2.300q2 2.700 0 5.400M10 1q2.500 4 0 8" /></svg>
        <div className="mt-[12px] flex w-[40px] shrink-0 flex-col items-center text-[7.700px] leading-[11px]">
          <div className="tracking-[-0.02em]">21:40</div>
          <div className="whitespace-nowrap tracking-[-0.03em]">11/25/2019</div>
        </div>
        <svg viewBox="0 0 18 16" className="ml-[13px] mt-[12px] h-[16px] w-[18px] shrink-0"><path d="M1 1h12v9H7l-2.500 2.500V10H1z" fill="#f4f4f4" /><path d="M3 3.500h8M3 5.500h8M3 7.500h5" stroke="#4a4038" strokeWidth=".8" /><circle cx="11.500" cy="10.500" r="4.900" fill="#3b3129" stroke="#9a928b" strokeWidth=".8" /><text x="11.500" y="13.200" fontSize="7.500" textAnchor="middle" fill="#fff" fontFamily="Open Sans">3</text></svg>
      </div>
      <span className="h-px w-full shrink-0 bg-[#6a6058]" />
      <span className="h-[3px] shrink-0" />
    </aside>
  );
}

export default function App() {
  return (
    <div className="h-[720px] w-[1280px] overflow-hidden bg-black font-['Open_Sans','Noto_Sans',sans-serif]">
      <div className="flex h-[712px]">
        <main className="relative flex w-[1238px] shrink-0 flex-col overflow-hidden bg-[#f0f0f0]">
          <Header />
          <Chart />
          <Terminal />
          <StatusBar />
          <ExpertDialog />
          <svg viewBox="0 0 8 12" className="absolute left-[801px] top-[365px] h-[13px] w-[9px]"><path d="M1 .5v9.500l2.200-2 1.500 3.500 1.600-.7L4.800 7.400h2.900z" fill="#000" /></svg>
        </main>
        <Taskbar />
      </div>
    </div>
  );
}
